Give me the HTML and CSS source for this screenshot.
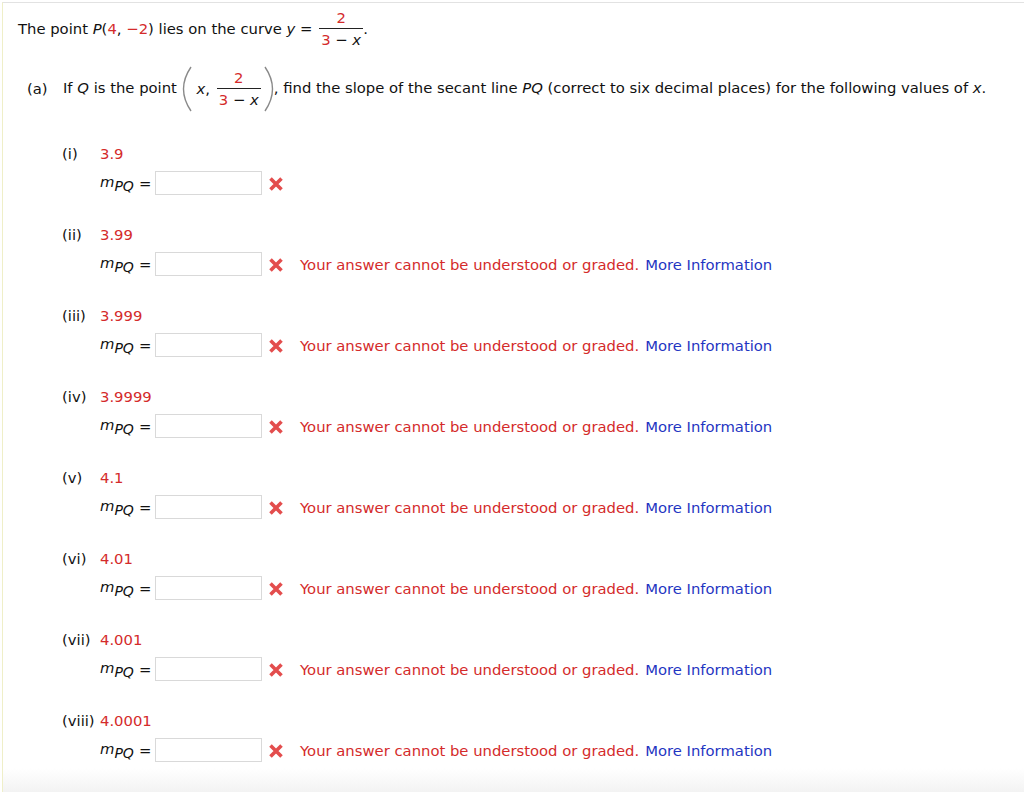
FILE: index.html
```html
<!DOCTYPE html>
<html>
<head>
<meta charset="utf-8">
<link rel="stylesheet" href="styles.css">
</head>
<body>
<div class="page">
  <p class="stem">The point <i>P</i>(<span class="red">4</span>, <span class="red">&minus;2</span>) lies on the curve <i>y</i> = <span class="frac"><span class="num red">2</span><span class="den"><span class="red">3</span> &minus; <i>x</i></span></span>.</p>

  <div class="part">
    <span class="plabel">(a)</span>
    <span class="ptext">If <i>Q</i> is the point <span class="paren"><svg width="11" height="46" viewBox="0 0 11 46"><path d="M9 1 Q1.5 12 1.5 23 Q1.5 34 9 45" fill="none" stroke="#8a8a8a" stroke-width="1.4"/></svg><span class="pin"><i>x</i>, <span class="frac"><span class="num red">2</span><span class="den"><span class="red">3</span> &minus; <i>x</i></span></span></span><svg width="11" height="46" viewBox="0 0 11 46"><path d="M2 1 Q9.5 12 9.5 23 Q9.5 34 2 45" fill="none" stroke="#8a8a8a" stroke-width="1.4"/></svg></span>, find the slope of the secant line <i>PQ</i> (correct to six decimal places) for the following values of <i>x</i>.</span>
  </div>

  <div class="items">
    <div class="item">
      <div class="ihead"><span class="ilabel">(i)</span><span class="red">3.9</span></div>
      <div class="answer"><span class="m"><i>m</i><sub><i>PQ</i></sub></span><span class="eq">=</span><span class="box"></span><svg class="xmark" width="16" height="16" viewBox="0 0 16 16"><path d="M2.5 2.5 L13.5 13.5 M13.5 2.5 L2.5 13.5" stroke="#e34d4d" stroke-width="3.6"/></svg></div>
    </div>
    <div class="item">
      <div class="ihead"><span class="ilabel">(ii)</span><span class="red">3.99</span></div>
      <div class="answer"><span class="m"><i>m</i><sub><i>PQ</i></sub></span><span class="eq">=</span><span class="box"></span><svg class="xmark" width="16" height="16" viewBox="0 0 16 16"><path d="M2.5 2.5 L13.5 13.5 M13.5 2.5 L2.5 13.5" stroke="#e34d4d" stroke-width="3.6"/></svg><span class="err">Your answer cannot be understood or graded.</span> <a class="more">More Information</a></div>
    </div>
    <div class="item">
      <div class="ihead"><span class="ilabel">(iii)</span><span class="red">3.999</span></div>
      <div class="answer"><span class="m"><i>m</i><sub><i>PQ</i></sub></span><span class="eq">=</span><span class="box"></span><svg class="xmark" width="16" height="16" viewBox="0 0 16 16"><path d="M2.5 2.5 L13.5 13.5 M13.5 2.5 L2.5 13.5" stroke="#e34d4d" stroke-width="3.6"/></svg><span class="err">Your answer cannot be understood or graded.</span> <a class="more">More Information</a></div>
    </div>
    <div class="item">
      <div class="ihead"><span class="ilabel">(iv)</span><span class="red">3.9999</span></div>
      <div class="answer"><span class="m"><i>m</i><sub><i>PQ</i></sub></span><span class="eq">=</span><span class="box"></span><svg class="xmark" width="16" height="16" viewBox="0 0 16 16"><path d="M2.5 2.5 L13.5 13.5 M13.5 2.5 L2.5 13.5" stroke="#e34d4d" stroke-width="3.6"/></svg><span class="err">Your answer cannot be understood or graded.</span> <a class="more">More Information</a></div>
    </div>
    <div class="item">
      <div class="ihead"><span class="ilabel">(v)</span><span class="red">4.1</span></div>
      <div class="answer"><span class="m"><i>m</i><sub><i>PQ</i></sub></span><span class="eq">=</span><span class="box"></span><svg class="xmark" width="16" height="16" viewBox="0 0 16 16"><path d="M2.5 2.5 L13.5 13.5 M13.5 2.5 L2.5 13.5" stroke="#e34d4d" stroke-width="3.6"/></svg><span class="err">Your answer cannot be understood or graded.</span> <a class="more">More Information</a></div>
    </div>
    <div class="item">
      <div class="ihead"><span class="ilabel">(vi)</span><span class="red">4.01</span></div>
      <div class="answer"><span class="m"><i>m</i><sub><i>PQ</i></sub></span><span class="eq">=</span><span class="box"></span><svg class="xmark" width="16" height="16" viewBox="0 0 16 16"><path d="M2.5 2.5 L13.5 13.5 M13.5 2.5 L2.5 13.5" stroke="#e34d4d" stroke-width="3.6"/></svg><span class="err">Your answer cannot be understood or graded.</span> <a class="more">More Information</a></div>
    </div>
    <div class="item">
      <div class="ihead"><span class="ilabel">(vii)</span><span class="red">4.001</span></div>
      <div class="answer"><span class="m"><i>m</i><sub><i>PQ</i></sub></span><span class="eq">=</span><span class="box"></span><svg class="xmark" width="16" height="16" viewBox="0 0 16 16"><path d="M2.5 2.5 L13.5 13.5 M13.5 2.5 L2.5 13.5" stroke="#e34d4d" stroke-width="3.6"/></svg><span class="err">Your answer cannot be understood or graded.</span> <a class="more">More Information</a></div>
    </div>
    <div class="item">
      <div class="ihead"><span class="ilabel">(viii)</span><span class="red">4.0001</span></div>
      <div class="answer"><span class="m"><i>m</i><sub><i>PQ</i></sub></span><span class="eq">=</span><span class="box"></span><svg class="xmark" width="16" height="16" viewBox="0 0 16 16"><path d="M2.5 2.5 L13.5 13.5 M13.5 2.5 L2.5 13.5" stroke="#e34d4d" stroke-width="3.6"/></svg><span class="err">Your answer cannot be understood or graded.</span> <a class="more">More Information</a></div>
    </div>
  </div>
</div>
</body>
</html>
```

FILE: styles.css
```css
html, body {
  margin: 0;
  padding: 0;
  background: #fff;
}
body {
  font-family: "DejaVu Sans", Verdana, sans-serif;
  font-size: 14.8px;
  color: #111;
}
.page {
  margin: 2px 0 0 2px;
  border-top: 1px solid #e2e2e2;
  border-left: 1px solid #efefc8;
  height: 790px;
  box-sizing: border-box;
  padding: 0 0 0 15px;
  background: linear-gradient(to bottom, #fff 0, #fff 97%, #f3f3f3 100%);
}
.red { color: #d42b2b; }
i { font-style: italic; }
.stem {
  margin: 0;
  padding-top: 6px;
  line-height: 36px;
  height: 40px;
}
.frac {
  display: inline-flex;
  flex-direction: column;
  align-items: center;
  line-height: 17px;
  margin-left: 2px;
  vertical-align: 11px;
}
.frac .num {
  padding: 0 2px 2px;
  border-bottom: 1px solid #222;
  align-self: stretch;
  text-align: center;
}
.frac .den {
  padding: 2px 2px 0;
}
.part {
  display: flex;
  margin: 16px 0 0 9px;
  align-items: center;
}
.plabel {
  width: 36px;
  flex: none;
}
.ptext {
  line-height: 46px;
}
.paren {
  display: inline-flex;
  align-items: center;
  vertical-align: middle;
}
.pin {
  margin: 0 2px 0 4px;
}
.items {
  margin-left: 44px;
  margin-top: 32px;
}
.item {
  height: 81px;
}
.ihead {
  line-height: 20px;
  display: flex;
}
.ilabel {
  width: 38px;
  flex: none;
}
.answer {
  display: flex;
  align-items: center;
  margin-top: 7px;
  height: 24px;
}
.m {
  margin-left: 38px;
  font-style: italic;
  width: 39px;
  flex: none;
}
.m sub {
  font-size: 14px;
  vertical-align: -4px;
}
.eq {
  width: 16px;
  flex: none;
}
.box {
  width: 105px;
  height: 22px;
  border: 1px solid #d9d9d9;
  background: #fff;
  flex: none;
}
.xmark {
  margin-left: 6px;
  margin-top: 2px;
  flex: none;
}
.err {
  color: #d42b2b;
  margin-left: 16px;
}
.more {
  color: #1f35c2;
  margin-left: 6px;
}
```
